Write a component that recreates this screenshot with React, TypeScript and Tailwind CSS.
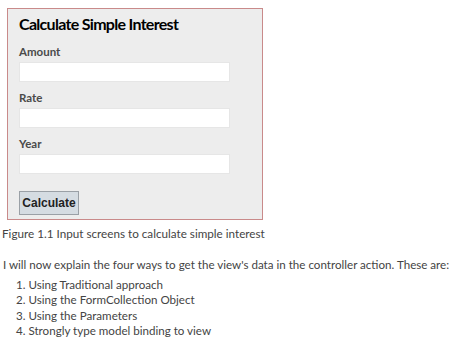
import React from "react";

export default function App() {
  const body = { fontFamily: 'Lato, "Open Sans", sans-serif' };
  return (
    <div className="w-[474px] h-[343px] bg-white overflow-hidden text-[#333]" style={body}>
      <div className="ml-[7px] mt-[8px] w-[256px] h-[212px] border border-[#c98a8a] bg-[#ededed] pl-[11px] pt-[3px]">
        <h1 className="text-[16px] font-bold text-black leading-[24px] tracking-[-0.7px]">Calculate Simple Interest</h1>
        <div className="mt-[9px] text-[11.5px] font-bold text-[#4a4a4a] leading-[14px]">Amount</div>
        <div className="mt-[3px] w-[211px] h-[20px] bg-white border border-[#e6e6e6]" />
        <div className="mt-[9px] text-[11.5px] font-bold text-[#4a4a4a] leading-[14px]">Rate</div>
        <div className="mt-[3px] w-[211px] h-[20px] bg-white border border-[#e6e6e6]" />
        <div className="mt-[9px] text-[11.5px] font-bold text-[#4a4a4a] leading-[14px]">Year</div>
        <div className="mt-[3px] w-[211px] h-[20px] bg-white border border-[#e6e6e6]" />
        <button
          className="mt-[17px] w-[60px] h-[24px] bg-[#d5dce2] border border-[#9aa0a6] text-[12px] font-bold text-[#222] flex items-center justify-center"
          style={{ fontFamily: '"Liberation Sans", Arial, sans-serif' }}
        >
          Calculate
        </button>
      </div>
      <p className="ml-[2px] mt-[5px] text-[11.7px] text-[#444] leading-[16px]">Figure 1.1 Input screens to calculate simple interest</p>
      <p className="ml-[3px] mt-[16px] text-[11.6px] text-[#444] leading-[16px]">I will now explain the four ways to get the view's data in the controller action. These are:</p>
      <ol className="ml-[16px] mt-[4px] text-[11.6px] text-[#444] leading-[15.4px]">
        <li>1. Using Traditional approach</li>
        <li>2. Using the FormCollection Object</li>
        <li>3. Using the Parameters</li>
        <li>4. Strongly type model binding to view</li>
      </ol>
    </div>
  );
}
